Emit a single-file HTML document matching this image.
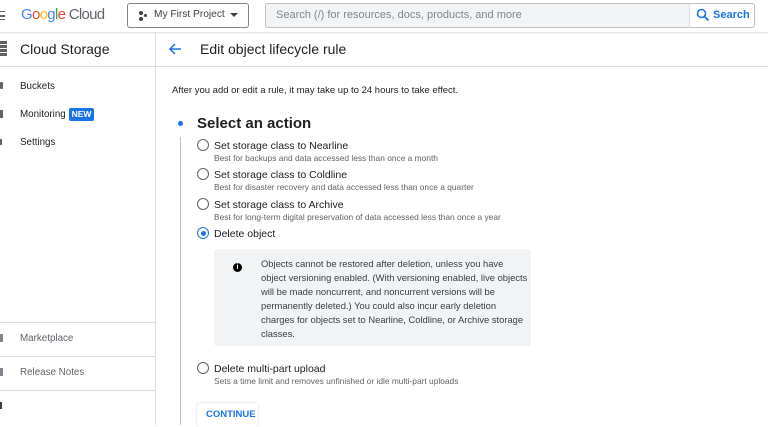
<!DOCTYPE html>
<html><head><style>
*{margin:0;padding:0;box-sizing:border-box}
body{width:768px;height:425px;overflow:hidden;background:#fff;font-family:"Liberation Sans",Arial,sans-serif;color:#202124;position:relative}
.a{position:absolute;white-space:nowrap}
.hdr{position:absolute;left:0;top:0;width:768px;height:32px;background:#fff;box-shadow:0 1px 2px rgba(0,0,0,.15)}
.radio{position:absolute;width:12px;height:12px;border:1.5px solid #5f6368;border-radius:50%}
.lab{font-size:10.5px;color:#202124}
.desc{font-size:8.4px;color:#5f6368}
.hr{position:absolute;left:0;width:155px;height:1px;background:#dadce0}
</style></head><body>
<div class="hdr"></div>
<div class="a" style="left:0;top:11px;width:5px;height:9px;border-top:1.5px solid #5f6368;border-bottom:1.5px solid #5f6368"></div>
<div class="a" style="left:0;top:15px;width:5px;height:1.5px;background:#5f6368"></div>
<div class="a" style="left:21px;top:6px;font-size:15px;letter-spacing:-0.7px"><span style="color:#4285f4">G</span><span style="color:#ea4335">o</span><span style="color:#fbbc04">o</span><span style="color:#4285f4">g</span><span style="color:#34a853">l</span><span style="color:#ea4335">e</span> <span style="color:#5f6368">Cloud</span></div>
<div class="a" style="left:127px;top:3px;width:122px;height:25px;border:1px solid #80868b;border-radius:3px"></div>
<div class="a" style="left:139px;top:11px;width:4px;height:4px;border-radius:50%;background:#3c4043"></div>
<div class="a" style="left:144px;top:14px;width:3px;height:3px;border-radius:50%;background:#3c4043"></div>
<div class="a" style="left:139px;top:17px;width:4px;height:4px;border-radius:50%;background:#3c4043"></div>
<div class="a" style="left:154px;top:9px;font-size:10.2px;color:#3c4043">My First Project</div>
<div class="a" style="left:230px;top:13px;width:0;height:0;border-left:4px solid transparent;border-right:4px solid transparent;border-top:4px solid #3c4043"></div>
<div class="a" style="left:265px;top:3px;width:490px;height:25px;border:1px solid #bdc1c6;border-radius:3px;background:#f1f3f4"></div>
<div class="a" style="left:689px;top:3px;width:66px;height:25px;border:1px solid #bdc1c6;border-left:1px solid #dadce0;border-radius:0 3px 3px 0;background:#fff"></div>
<div class="a" style="left:276px;top:9px;font-size:11px;color:#80868b">Search (/) for resources, docs, products, and more</div>
<svg class="a" style="left:696px;top:8px" width="14" height="14" viewBox="0 0 14 14"><circle cx="5.5" cy="5.5" r="4" fill="none" stroke="#1a73e8" stroke-width="1.6"/><path d="M8.5 8.5L12.5 12.5" stroke="#1a73e8" stroke-width="1.8"/></svg>
<div class="a" style="left:713px;top:9px;font-size:11px;color:#1a73e8;font-weight:bold">Search</div>

<div class="a" style="left:155px;top:32px;width:1px;height:393px;background:#dadce0"></div>
<div class="a" style="left:0;top:66px;width:768px;height:1px;background:#dadce0"></div>
<div class="a" style="left:0;top:41px;width:7px;height:16px;background:repeating-linear-gradient(#5f6368 0 3px,#fff 3px 4px)"></div>
<div class="a" style="left:20px;top:41px;font-size:14px;color:#202124">Cloud Storage</div>
<div class="a" style="left:0;top:82px;width:3px;height:7px;background:#5f6368;border-radius:1px"></div>
<div class="a" style="left:20px;top:81px;font-size:9.8px;color:#202124">Buckets</div>
<div class="a" style="left:0;top:110px;width:3px;height:8px;background:#5f6368"></div>
<div class="a" style="left:20px;top:109px;font-size:9.8px;color:#202124">Monitoring</div>
<div class="a" style="left:69px;top:108px;width:25px;height:13px;background:#1a73e8;border-radius:2px;color:#fff;font-size:8.5px;font-weight:bold;text-align:center;line-height:13px">NEW</div>
<div class="a" style="left:0;top:139px;width:2px;height:6px;background:#5f6368"></div>
<div class="a" style="left:20px;top:137px;font-size:9.8px;color:#202124">Settings</div>
<div class="hr" style="top:322px"></div>
<div class="hr" style="top:356px"></div>
<div class="hr" style="top:390px"></div>
<div class="a" style="left:0;top:334px;width:3px;height:8px;background:#80868b"></div>
<div class="a" style="left:20px;top:333px;font-size:9.8px;color:#5f6368">Marketplace</div>
<div class="a" style="left:0;top:368px;width:3px;height:8px;background:#80868b"></div>
<div class="a" style="left:20px;top:367px;font-size:9.8px;color:#5f6368">Release Notes</div>
<div class="a" style="left:0;top:402px;width:2px;height:7px;background:#3c4043"></div>

<svg class="a" style="left:168px;top:42px" width="14" height="14" viewBox="0 0 14 14"><path d="M13 7H2M7 2L2 7l5 5" fill="none" stroke="#1a73e8" stroke-width="1.5"/></svg>
<div class="a" style="left:200px;top:41px;font-size:14px;color:#202124">Edit object lifecycle rule</div>
<div class="a" style="left:172px;top:85px;font-size:9.5px;color:#202124">After you add or edit a rule, it may take up to 24 hours to take effect.</div>
<div class="a" style="left:178px;top:121px;width:5px;height:5px;border-radius:50%;background:#1a73e8"></div>
<div class="a" style="left:197px;top:115px;font-size:15px;font-weight:bold;color:#202124">Select an action</div>
<div class="a" style="left:180px;top:137px;width:1px;height:288px;background:#bdc1c6"></div>

<div class="radio" style="left:197px;top:139px"></div>
<div class="a lab" style="left:214px;top:140px">Set storage class to Nearline</div>
<div class="a desc" style="left:214px;top:153px">Best for backups and data accessed less than once a month</div>
<div class="radio" style="left:197px;top:168px"></div>
<div class="a lab" style="left:214px;top:169px">Set storage class to Coldline</div>
<div class="a desc" style="left:214px;top:182px">Best for disaster recovery and data accessed less than once a quarter</div>
<div class="radio" style="left:197px;top:198px"></div>
<div class="a lab" style="left:214px;top:199px">Set storage class to Archive</div>
<div class="a desc" style="left:214px;top:212px">Best for long-term digital preservation of data accessed less than once a year</div>
<div class="radio" style="left:197px;top:227px;border-color:#1a73e8"></div>
<div class="a" style="left:200.5px;top:230.5px;width:5px;height:5px;border-radius:50%;background:#1a73e8"></div>
<div class="a lab" style="left:214px;top:228px">Delete object</div>

<div class="a" style="left:214px;top:249px;width:317px;height:97px;background:#f1f3f4;border-radius:3px"></div>
<div class="a" style="left:233px;top:263px;width:9px;height:9px;border-radius:50%;background:#000;color:#fff;font-size:7px;font-weight:bold;text-align:center;line-height:9px">i</div>
<div class="a" style="left:261px;top:257px;font-size:9.4px;line-height:14px;color:#3c4043">Objects cannot be restored after deletion, unless you have<br>object versioning enabled. (With versioning enabled, live objects<br>will be made noncurrent, and noncurrent versions will be<br>permanently deleted.) You could also incur early deletion<br>charges for objects set to Nearline, Coldline, or Archive storage<br>classes.</div>

<div class="radio" style="left:197px;top:362px"></div>
<div class="a lab" style="left:214px;top:363px">Delete multi-part upload</div>
<div class="a desc" style="left:214px;top:376px">Sets a time limit and removes unfinished or idle multi-part uploads</div>
<div class="a" style="left:197px;top:403px;width:61px;height:24px;border-radius:3px;box-shadow:0 0 2px rgba(0,0,0,.2);background:#fff"></div>
<div class="a" style="left:206px;top:409px;font-size:9.5px;font-weight:bold;color:#1a73e8">CONTINUE</div>
</body></html>
